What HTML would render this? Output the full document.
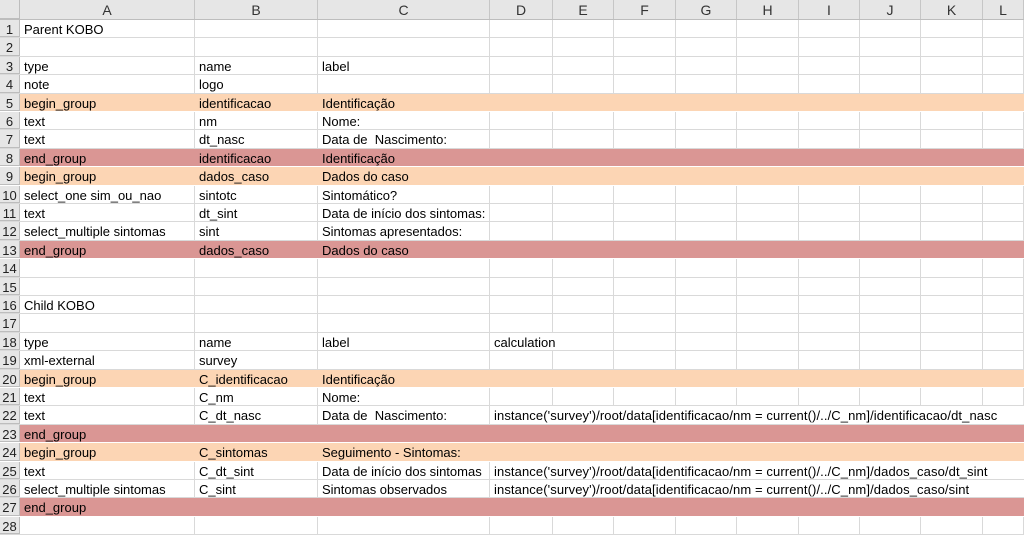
<!DOCTYPE html>
<html><head><meta charset="utf-8"><style>
*{margin:0;padding:0;box-sizing:border-box}
body{width:1024px;height:534px;overflow:hidden;background:#fff;font-family:"Liberation Sans",Arial,sans-serif;font-size:13px;color:#000;position:relative}
.r{position:absolute;left:0;width:1024px;height:18.4px;display:flex;border-bottom:1px solid #d9d9d9}
.r>div{flex-shrink:0;height:100%;border-right:1px solid #d9d9d9;white-space:nowrap;overflow:visible;padding-left:4px;line-height:19px}
.r>div:first-child{background:#e6e6e6;border-right:1px solid #bdbdbd;border-bottom:1px solid #bdbdbd;text-align:center;padding-left:0;color:#222;font-size:13px}
.c1{width:175px}.c2{width:123px}.c3{width:172px}.c4{width:63px}.c5{width:61px}.c6{width:62px}.c7{width:61px}.c8{width:62px}.c9{width:61px}.c10{width:61px}.c11{width:62px}.c12{width:41px}
.w{width:534px;letter-spacing:0.1px}
.n{width:20px}
.p>div:not(:first-child){background:#fcd5b4;border-right-color:#fcd5b4}
.d>div:not(:first-child){background:#da9694;border-right-color:#da9694}
.p,.d{border-bottom-color:transparent}
.h{top:0;height:20px;background:#e6e6e6;border-bottom:1px solid #bdbdbd}
.h>div{text-align:center;padding-left:0;border-right:1px solid #c6c6c6;font-size:14px;color:#333;line-height:20px}
</style></head><body>
<div class="r h"><div class="n" style="background:#e6e6e6"></div><div class="c1">A</div><div class="c2">B</div><div class="c3">C</div><div class="c4">D</div><div class="c5">E</div><div class="c6">F</div><div class="c7">G</div><div class="c8">H</div><div class="c9">I</div><div class="c10">J</div><div class="c11">K</div><div class="c12">L</div></div>

<div class="r" style="top:20px"><div class="n">1</div><div class="c1">Parent KOBO</div><div class="c2"></div><div class="c3"></div><div class="c4"></div><div class="c5"></div><div class="c6"></div><div class="c7"></div><div class="c8"></div><div class="c9"></div><div class="c10"></div><div class="c11"></div><div class="c12"></div></div>
<div class="r" style="top:38.4px"><div class="n">2</div><div class="c1"></div><div class="c2"></div><div class="c3"></div><div class="c4"></div><div class="c5"></div><div class="c6"></div><div class="c7"></div><div class="c8"></div><div class="c9"></div><div class="c10"></div><div class="c11"></div><div class="c12"></div></div>
<div class="r" style="top:56.8px"><div class="n">3</div><div class="c1">type</div><div class="c2">name</div><div class="c3">label</div><div class="c4"></div><div class="c5"></div><div class="c6"></div><div class="c7"></div><div class="c8"></div><div class="c9"></div><div class="c10"></div><div class="c11"></div><div class="c12"></div></div>
<div class="r" style="top:75.2px"><div class="n">4</div><div class="c1">note</div><div class="c2">logo</div><div class="c3"></div><div class="c4"></div><div class="c5"></div><div class="c6"></div><div class="c7"></div><div class="c8"></div><div class="c9"></div><div class="c10"></div><div class="c11"></div><div class="c12"></div></div>
<div class="r p" style="top:93.6px"><div class="n">5</div><div class="c1">begin_group</div><div class="c2">identificacao</div><div class="c3">Identificação</div><div class="c4"></div><div class="c5"></div><div class="c6"></div><div class="c7"></div><div class="c8"></div><div class="c9"></div><div class="c10"></div><div class="c11"></div><div class="c12"></div></div>
<div class="r" style="top:112px"><div class="n">6</div><div class="c1">text</div><div class="c2">nm</div><div class="c3">Nome:</div><div class="c4"></div><div class="c5"></div><div class="c6"></div><div class="c7"></div><div class="c8"></div><div class="c9"></div><div class="c10"></div><div class="c11"></div><div class="c12"></div></div>
<div class="r" style="top:130.4px"><div class="n">7</div><div class="c1">text</div><div class="c2">dt_nasc</div><div class="c3">Data de&nbsp; Nascimento:</div><div class="c4"></div><div class="c5"></div><div class="c6"></div><div class="c7"></div><div class="c8"></div><div class="c9"></div><div class="c10"></div><div class="c11"></div><div class="c12"></div></div>
<div class="r d" style="top:148.8px"><div class="n">8</div><div class="c1">end_group</div><div class="c2">identificacao</div><div class="c3">Identificação</div><div class="c4"></div><div class="c5"></div><div class="c6"></div><div class="c7"></div><div class="c8"></div><div class="c9"></div><div class="c10"></div><div class="c11"></div><div class="c12"></div></div>
<div class="r p" style="top:167.2px"><div class="n">9</div><div class="c1">begin_group</div><div class="c2">dados_caso</div><div class="c3">Dados do caso</div><div class="c4"></div><div class="c5"></div><div class="c6"></div><div class="c7"></div><div class="c8"></div><div class="c9"></div><div class="c10"></div><div class="c11"></div><div class="c12"></div></div>
<div class="r" style="top:185.6px"><div class="n">10</div><div class="c1">select_one sim_ou_nao</div><div class="c2">sintotc</div><div class="c3">Sintomático?</div><div class="c4"></div><div class="c5"></div><div class="c6"></div><div class="c7"></div><div class="c8"></div><div class="c9"></div><div class="c10"></div><div class="c11"></div><div class="c12"></div></div>
<div class="r" style="top:204px"><div class="n">11</div><div class="c1">text</div><div class="c2">dt_sint</div><div class="c3">Data de início dos sintomas:</div><div class="c4"></div><div class="c5"></div><div class="c6"></div><div class="c7"></div><div class="c8"></div><div class="c9"></div><div class="c10"></div><div class="c11"></div><div class="c12"></div></div>
<div class="r" style="top:222.4px"><div class="n">12</div><div class="c1">select_multiple sintomas</div><div class="c2">sint</div><div class="c3">Sintomas apresentados:</div><div class="c4"></div><div class="c5"></div><div class="c6"></div><div class="c7"></div><div class="c8"></div><div class="c9"></div><div class="c10"></div><div class="c11"></div><div class="c12"></div></div>
<div class="r d" style="top:240.8px"><div class="n">13</div><div class="c1">end_group</div><div class="c2">dados_caso</div><div class="c3">Dados do caso</div><div class="c4"></div><div class="c5"></div><div class="c6"></div><div class="c7"></div><div class="c8"></div><div class="c9"></div><div class="c10"></div><div class="c11"></div><div class="c12"></div></div>
<div class="r" style="top:259.2px"><div class="n">14</div><div class="c1"></div><div class="c2"></div><div class="c3"></div><div class="c4"></div><div class="c5"></div><div class="c6"></div><div class="c7"></div><div class="c8"></div><div class="c9"></div><div class="c10"></div><div class="c11"></div><div class="c12"></div></div>
<div class="r" style="top:277.6px"><div class="n">15</div><div class="c1"></div><div class="c2"></div><div class="c3"></div><div class="c4"></div><div class="c5"></div><div class="c6"></div><div class="c7"></div><div class="c8"></div><div class="c9"></div><div class="c10"></div><div class="c11"></div><div class="c12"></div></div>
<div class="r" style="top:296px"><div class="n">16</div><div class="c1">Child KOBO</div><div class="c2"></div><div class="c3"></div><div class="c4"></div><div class="c5"></div><div class="c6"></div><div class="c7"></div><div class="c8"></div><div class="c9"></div><div class="c10"></div><div class="c11"></div><div class="c12"></div></div>
<div class="r" style="top:314.4px"><div class="n">17</div><div class="c1"></div><div class="c2"></div><div class="c3"></div><div class="c4"></div><div class="c5"></div><div class="c6"></div><div class="c7"></div><div class="c8"></div><div class="c9"></div><div class="c10"></div><div class="c11"></div><div class="c12"></div></div>
<div class="r" style="top:332.8px"><div class="n">18</div><div class="c1">type</div><div class="c2">name</div><div class="c3">label</div><div class="c4" style="border-right:none">calculation</div><div class="c5"></div><div class="c6"></div><div class="c7"></div><div class="c8"></div><div class="c9"></div><div class="c10"></div><div class="c11"></div><div class="c12"></div></div>
<div class="r" style="top:351.2px"><div class="n">19</div><div class="c1">xml-external</div><div class="c2">survey</div><div class="c3"></div><div class="c4"></div><div class="c5"></div><div class="c6"></div><div class="c7"></div><div class="c8"></div><div class="c9"></div><div class="c10"></div><div class="c11"></div><div class="c12"></div></div>
<div class="r p" style="top:369.6px"><div class="n">20</div><div class="c1">begin_group</div><div class="c2">C_identificacao</div><div class="c3">Identificação</div><div class="c4"></div><div class="c5"></div><div class="c6"></div><div class="c7"></div><div class="c8"></div><div class="c9"></div><div class="c10"></div><div class="c11"></div><div class="c12"></div></div>
<div class="r" style="top:388px"><div class="n">21</div><div class="c1">text</div><div class="c2">C_nm</div><div class="c3">Nome:</div><div class="c4"></div><div class="c5"></div><div class="c6"></div><div class="c7"></div><div class="c8"></div><div class="c9"></div><div class="c10"></div><div class="c11"></div><div class="c12"></div></div>
<div class="r" style="top:406.4px"><div class="n">22</div><div class="c1">text</div><div class="c2">C_dt_nasc</div><div class="c3">Data de&nbsp; Nascimento:</div><div class="w" style="border-right:none">instance('survey')/root/data[identificacao/nm = current()/../C_nm]/identificacao/dt_nasc</div></div>
<div class="r d" style="top:424.8px"><div class="n">23</div><div class="c1">end_group</div><div class="c2"></div><div class="c3"></div><div class="c4"></div><div class="c5"></div><div class="c6"></div><div class="c7"></div><div class="c8"></div><div class="c9"></div><div class="c10"></div><div class="c11"></div><div class="c12"></div></div>
<div class="r p" style="top:443.2px"><div class="n">24</div><div class="c1">begin_group</div><div class="c2">C_sintomas</div><div class="c3">Seguimento - Sintomas:</div><div class="c4"></div><div class="c5"></div><div class="c6"></div><div class="c7"></div><div class="c8"></div><div class="c9"></div><div class="c10"></div><div class="c11"></div><div class="c12"></div></div>
<div class="r" style="top:461.6px"><div class="n">25</div><div class="c1">text</div><div class="c2">C_dt_sint</div><div class="c3">Data de início dos sintomas</div><div class="w" style="border-right:none">instance('survey')/root/data[identificacao/nm = current()/../C_nm]/dados_caso/dt_sint</div></div>
<div class="r" style="top:480px"><div class="n">26</div><div class="c1">select_multiple sintomas</div><div class="c2">C_sint</div><div class="c3">Sintomas observados</div><div class="w" style="border-right:none">instance('survey')/root/data[identificacao/nm = current()/../C_nm]/dados_caso/sint</div></div>
<div class="r d" style="top:498.4px"><div class="n">27</div><div class="c1">end_group</div><div class="c2"></div><div class="c3"></div><div class="c4"></div><div class="c5"></div><div class="c6"></div><div class="c7"></div><div class="c8"></div><div class="c9"></div><div class="c10"></div><div class="c11"></div><div class="c12"></div></div>
<div class="r" style="top:516.8px"><div class="n">28</div><div class="c1"></div><div class="c2"></div><div class="c3"></div><div class="c4"></div><div class="c5"></div><div class="c6"></div><div class="c7"></div><div class="c8"></div><div class="c9"></div><div class="c10"></div><div class="c11"></div><div class="c12"></div></div>
</body></html>
